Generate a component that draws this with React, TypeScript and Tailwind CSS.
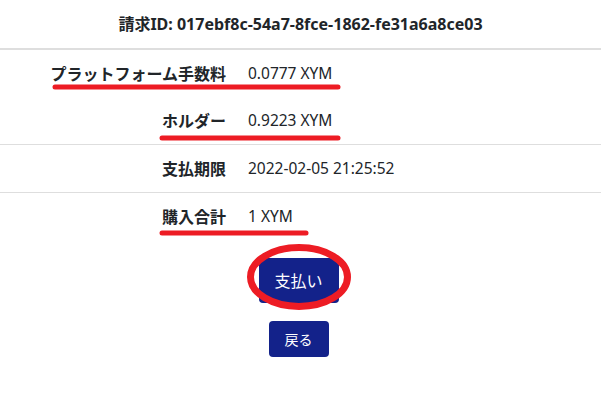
const rows = [
  { label: "プラットフォーム手数料", value: "0.0777 XYM", h: "h-[47px]", border: false },
  { label: "ホルダー", value: "0.9223 XYM", h: "h-[48px]", border: true },
  { label: "支払期限", value: "2022-02-05 21:25:52", h: "h-[48px]", border: true },
  { label: "購入合計", value: "1 XYM", h: "h-[47px]", border: false },
];

const App = () => {
  return (
    <div
      className="relative w-[601px] h-[407px] bg-white text-[#212529] overflow-hidden"
      style={{ fontFamily: '"Noto Sans", "Noto Sans CJK JP", sans-serif' }}
    >
      <div className="h-[50px] flex items-center justify-center border-b-2 border-[#dedede] text-[16px] font-bold">
        請求ID: 017ebf8c-54a7-8fce-1862-fe31a6a8ce03
      </div>

      {rows.map((row) => (
        <div
          key={row.label}
          className={`${row.h} flex items-center text-[16px] ${
            row.border ? "border-b border-[#dedede]" : ""
          }`}
        >
          <div className="w-[226px] text-right font-bold">{row.label}</div>
          <div className="ml-[22px] text-[15.5px]">{row.value}</div>
        </div>
      ))}

      <div className="flex flex-col items-center mt-[18px] gap-[18px] pr-[4px]">
        <button className="w-[80px] h-[45px] rounded bg-[#13228a] text-white text-[16px]">
          支払い
        </button>
        <button className="w-[60px] h-[36px] rounded bg-[#13228a] text-white text-[14px]">
          戻る
        </button>
      </div>

      {/* red annotations drawn over the page */}
      <svg
        className="absolute inset-0 pointer-events-none"
        width="601"
        height="407"
        viewBox="0 0 601 407"
      >
        <g stroke="#ed1c24" strokeLinecap="round" fill="none">
          <line x1="55" y1="87" x2="338" y2="87" strokeWidth="5" />
          <line x1="162" y1="138" x2="338" y2="138" strokeWidth="5" />
          <line x1="162" y1="233" x2="306" y2="233" strokeWidth="5" />
          <ellipse cx="299" cy="277" rx="48.5" ry="29.5" strokeWidth="7" />
        </g>
      </svg>
    </div>
  );
};

export default App;
